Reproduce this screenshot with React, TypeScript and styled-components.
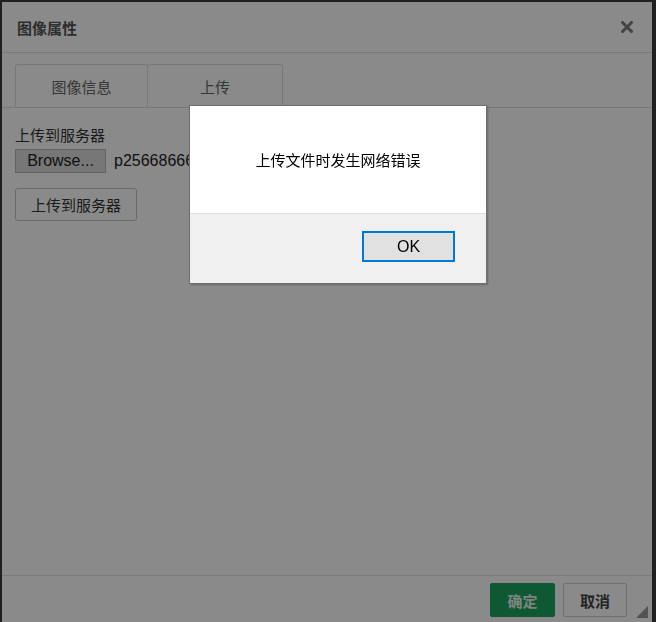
import React from 'react';
import styled, { createGlobalStyle } from 'styled-components';

const GlobalStyle = createGlobalStyle`
  html, body {
    margin: 0;
    padding: 0;
    height: 100%;
    overflow: hidden;
  }
  body {
    background: #3c3c3c;
    font-family: "Noto Sans CJK SC", "Liberation Sans", sans-serif;
  }
`;

const CJK = `"Noto Sans CJK SC", "Liberation Sans", sans-serif`;

export default function App() {
  return (
    <>
      <GlobalStyle />
      <Dialog>
        <Header>
          <Title>图像属性</Title>
          <Close aria-label="close">
            <svg width="12" height="12" viewBox="0 0 12 12">
              <path d="M1.5 1.5 L10.5 10.5 M10.5 1.5 L1.5 10.5" stroke="currentColor" strokeWidth="3" strokeLinecap="square" />
            </svg>
          </Close>
        </Header>
        <Body>
          <TabBar>
            <Tab $width={133}>图像信息</Tab>
            <Tab $width={136} $active>上传</Tab>
          </TabBar>
          <Content>
            <Label>上传到服务器</Label>
            <FileRow>
              <BrowseButton>Browse...</BrowseButton>
              <FileName>p2566866609.jpg</FileName>
            </FileRow>
            <UploadButton>上传到服务器</UploadButton>
          </Content>
        </Body>
        <Footer>
          <PrimaryButton>确定</PrimaryButton>
          <SecondaryButton>取消</SecondaryButton>
        </Footer>
        <ResizeGrip />
      </Dialog>
      <Overlay />
      <Alert>
        <AlertMessage>上传文件时发生网络错误</AlertMessage>
        <AlertFooter>
          <OkButton>OK</OkButton>
        </AlertFooter>
      </Alert>
    </>
  );
}

const Dialog = styled.div`
  position: relative;
  margin: 2px 0 0 2px;
  width: 650px;
  height: 620px;
  background: #fff;
  display: flex;
  flex-direction: column;
  overflow: hidden;
`;

const Header = styled.div`
  height: 50px;
  border-bottom: 1px solid #e2e2e2;
  display: flex;
  align-items: center;
  justify-content: space-between;
  padding: 0 19px 0 15px;
`;

const Title = styled.div`
  font-family: ${CJK};
  font-size: 15px;
  font-weight: bold;
  color: #555;
`;

const Close = styled.div`
  color: #7c7c7c;
  display: flex;
  align-items: center;
`;

const Body = styled.div`
  flex: 1;
  display: flex;
  flex-direction: column;
`;

const TabBar = styled.div`
  display: flex;
  padding: 11px 0 0 13px;
  border-bottom: 1px solid #dedede;
`;

const Tab = styled.div<{ $width: number; $active?: boolean }>`
  width: ${p => p.$width}px;
  height: 43px;
  box-sizing: border-box;
  border: 1px solid #dedede;
  border-bottom: none;
  border-radius: 3px 3px 0 0;
  margin-left: ${p => (p.$active ? '-1px' : '0')};
  display: flex;
  align-items: center;
  justify-content: center;
  font-family: ${CJK};
  font-size: 15px;
  color: #666;
  background: #fff;
`;

const Content = styled.div`
  padding: 17px 13px 0;
  display: flex;
  flex-direction: column;
  align-items: flex-start;
`;

const Label = styled.div`
  font-family: ${CJK};
  font-size: 15px;
  line-height: 20px;
  color: #333;
`;

const FileRow = styled.div`
  display: flex;
  align-items: center;
  margin-top: 4px;
  gap: 8px;
`;

const BrowseButton = styled.div`
  width: 91px;
  height: 24px;
  box-sizing: border-box;
  background: #dcdcdc;
  border: 1px solid #b8b8b8;
  display: flex;
  align-items: center;
  justify-content: center;
  font-family: "Liberation Sans", Arial, sans-serif;
  font-size: 16px;
  color: #222;
`;

const FileName = styled.span`
  font-family: "Liberation Sans", Arial, sans-serif;
  font-size: 16px;
  color: #222;
`;

const UploadButton = styled.div`
  margin-top: 15px;
  width: 122px;
  height: 33px;
  box-sizing: border-box;
  border: 1px solid #c4c4c4;
  border-radius: 3px;
  display: flex;
  align-items: center;
  justify-content: center;
  font-family: ${CJK};
  font-size: 15px;
  color: #333;
`;

const Footer = styled.div`
  height: 47px;
  box-sizing: border-box;
  border-top: 1px solid #e2e2e2;
  display: flex;
  justify-content: flex-end;
  align-items: flex-start;
  gap: 8px;
  padding: 7px 25px 0 0;
`;

const BaseButton = styled.div`
  height: 34px;
  box-sizing: border-box;
  border-radius: 2px;
  display: flex;
  align-items: center;
  justify-content: center;
  font-family: ${CJK};
  font-size: 15px;
  font-weight: bold;
`;

const PrimaryButton = styled(BaseButton)`
  width: 65px;
  background: #1ba45f;
  border: 1px solid #1ba45f;
  color: #e6f4ec;
`;

const SecondaryButton = styled(BaseButton)`
  width: 64px;
  background: #fff;
  border: 1px solid #cfcfcf;
  color: #444;
`;

const ResizeGrip = styled.div`
  position: absolute;
  right: 4px;
  bottom: 4px;
  width: 0;
  height: 0;
  border-style: solid;
  border-width: 0 0 12px 12px;
  border-color: transparent transparent #9a9a9a transparent;
`;

const Overlay = styled.div`
  position: fixed;
  inset: 0;
  background: rgba(0, 0, 0, 0.46);
`;

const Alert = styled.div`
  position: fixed;
  left: 189px;
  top: 105px;
  width: 298px;
  height: 179px;
  box-sizing: border-box;
  border: 1px solid #6e6e6e;
  background: #fff;
  display: flex;
  flex-direction: column;
  box-shadow: 1px 1px 2px rgba(0, 0, 0, 0.25);
`;

const AlertMessage = styled.div`
  height: 107px;
  display: flex;
  align-items: center;
  justify-content: center;
  font-family: ${CJK};
  font-size: 15px;
  color: #000;
`;

const AlertFooter = styled.div`
  flex: 1;
  background: #f0f0f0;
  border-top: 1px solid #dfdfdf;
  display: flex;
  justify-content: flex-end;
  align-items: flex-start;
  padding: 17px 31px 0 0;
`;

const OkButton = styled.div`
  width: 93px;
  height: 31px;
  box-sizing: border-box;
  border: 2px solid #0078d7;
  background: #e1e1e1;
  display: flex;
  align-items: center;
  justify-content: center;
  font-family: "Liberation Sans", Arial, sans-serif;
  font-size: 16px;
  color: #000;
`;
